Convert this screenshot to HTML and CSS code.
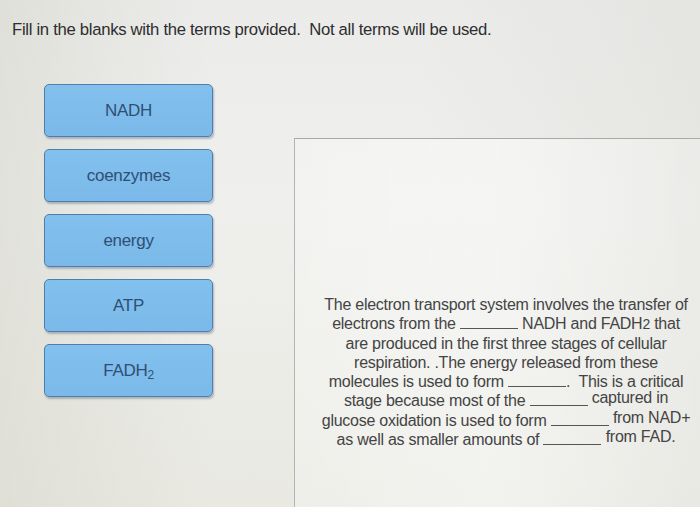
FILE: index.html
```html
<!DOCTYPE html>
<html lang="en">
<head>
<meta charset="utf-8">
<title>Fill in the blanks</title>
<link rel="stylesheet" href="styles.css">
</head>
<body>
<div class="page">
  <p class="prompt">Fill in the blanks with the terms provided.&nbsp; Not all terms will be used.</p>
  <div class="workspace">
    <div class="terms">
      <div class="term"><span>NADH</span></div>
      <div class="term"><span>coenzymes</span></div>
      <div class="term"><span>energy</span></div>
      <div class="term"><span>ATP</span></div>
      <div class="term"><span>FADH<sub>2</sub></span></div>
    </div>
    <div class="answer">
      <div class="passage">
        <div class="line">The electron transport system involves the transfer of</div>
        <div class="line">electrons from the <span class="blank"></span> NADH and FADH<span class="sm">2</span> that</div>
        <div class="line">are produced in the first three stages of cellular</div>
        <div class="line">respiration. .The energy released from these</div>
        <div class="line">molecules is used to form <span class="blank"></span>.&nbsp; This is a critical</div>
        <div class="line">stage because most of the <span class="blank"></span> <span class="up">captured in</span></div>
        <div class="line">glucose oxidation is used to form <span class="blank"></span> <span class="up">from NAD+</span></div>
        <div class="line">as well as smaller amounts of <span class="blank"></span> <span class="up">from FAD.</span></div>
      </div>
    </div>
  </div>
</div>
</body>
</html>
```
FILE: styles.css
```css
* { box-sizing: border-box; }

html, body {
  margin: 0;
  width: 700px;
  height: 507px;
  overflow: hidden;
}

body {
  font-family: "Liberation Sans", Arial, sans-serif;
  color: #3a3a3a;
  background:
    linear-gradient(90deg, rgba(215,215,205,0.55) 0%, rgba(240,240,238,0) 30%, rgba(248,248,248,0) 60%, rgba(220,220,215,0.45) 100%),
    linear-gradient(180deg, #ebebea 0%, #efefed 40%, #e9e9e2 100%);
}

.page {
  height: 100%;
  display: flex;
  flex-direction: column;
}

.prompt {
  margin: 21px 0 0 12px;
  font-size: 16.7px;
  line-height: 18px;
  color: #2e2e2e;
  letter-spacing: -0.3px;
}

.workspace {
  flex: 1;
  display: flex;
  margin-top: 27px;
}

.terms {
  width: 294px;
  padding: 18px 0 0 44px;
  display: flex;
  flex-direction: column;
  gap: 12px;
}

.term {
  width: 169px;
  height: 53px;
  display: flex;
  align-items: center;
  justify-content: center;
  background: linear-gradient(180deg, #82c0ee 0%, #7ab9e9 100%);
  border: 1px solid #4f7ea8;
  border-radius: 5px;
  box-shadow: 1px 2px 2px rgba(60, 80, 110, 0.35);
  font-size: 17px;
  letter-spacing: -0.3px;
  color: #2f4f74;
}

.term sub {
  font-size: 12px;
  vertical-align: -3px;
  line-height: 0;
}

.answer {
  flex: 1;
  margin-top: 72px;
  border-top: 1px solid #a9a9a9;
  border-left: 1px solid #b4b4b4;
  background: linear-gradient(90deg, rgba(255,255,255,0.25), rgba(255,255,255,0.45) 50%, rgba(255,255,255,0.2));
  padding: 156px 0 0 21px;
}

.passage {
  width: 380px;
  font-size: 16px;
  line-height: 19px;
  color: #444;
  letter-spacing: -0.25px;
  text-align: center;
}

.line:nth-child(n+6) {
  line-height: 19.5px;
}

.blank {
  display: inline-block;
  width: 58px;
  height: 1px;
  border-bottom: 1px solid #555;
  vertical-align: 0;
}

.sm { font-size: 14px; }

.up {
  position: relative;
  top: -3px;
}
```
